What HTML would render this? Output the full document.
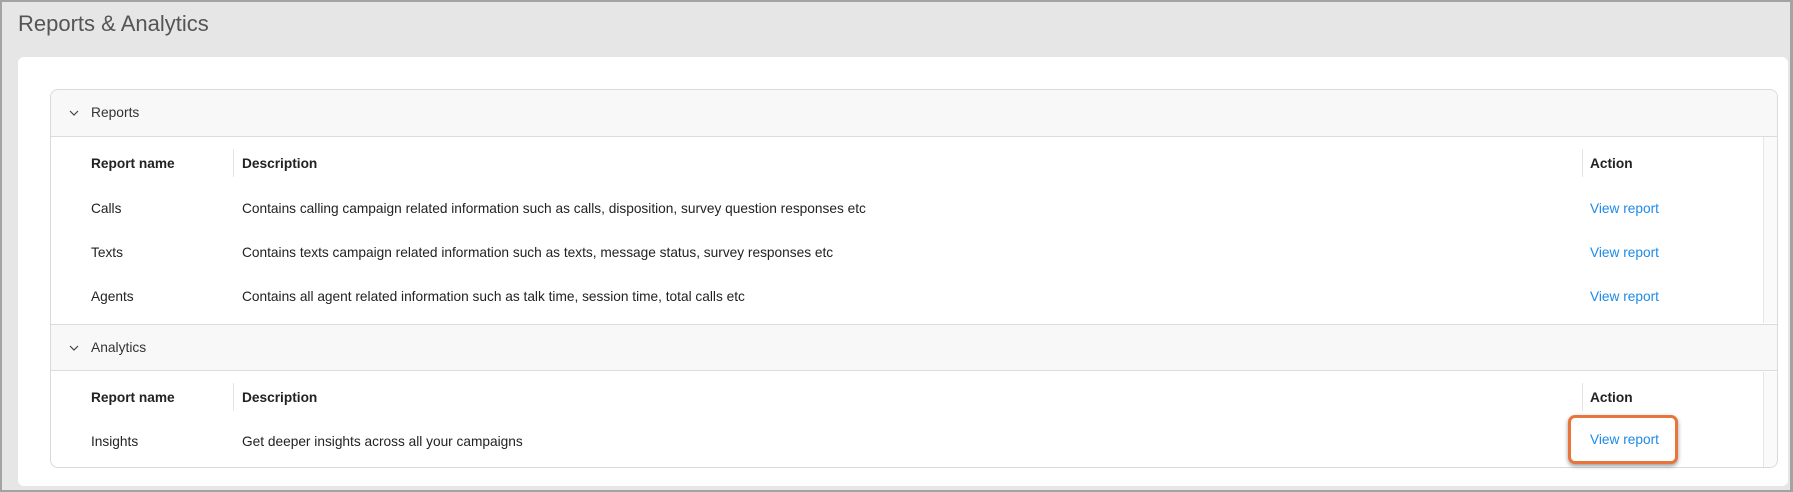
<!DOCTYPE html>
<html><head><meta charset="utf-8"><style>
*{box-sizing:border-box;margin:0;padding:0}
body{width:1793px;height:492px;overflow:hidden;background:#a3a3a3;font-family:"Liberation Sans",sans-serif;position:relative}
#frame{position:absolute;left:2px;top:2px;width:1788px;height:488px;background:#e6e6e6;overflow:hidden}
.t{position:absolute;left:16px;top:9px;font-size:22px;color:#555}
#card{position:absolute;left:18px;top:57px;width:1770px;height:429px;background:#fff;border-radius:6px}
#panel{position:absolute;left:50px;top:89px;width:1728px;height:379px;border:1px solid #d9d9d9;border-radius:8px;overflow:hidden;background:#fff}
.hd{position:absolute;left:0;width:100%;height:47px;background:#f8f8f8;border-bottom:1px solid #dcdcdc;font-size:13.8px;color:#333}
.hd span{position:absolute;left:40px;top:15px}
.hd svg{position:absolute;left:18px;top:20px}
.tx{position:absolute;font-size:13.7px;color:#222;white-space:nowrap}
.b{font-weight:bold}
.l{color:#1d8ae8}
.sep{position:absolute;width:1px;height:28px;background:#e4e4e4}
.sb{position:absolute;left:1712px;width:1px;background:#e6e6e6}
.sbb{position:absolute;left:1713px;width:15px;background:#fafafa}
#box{position:absolute;left:1568px;top:415px;width:110px;height:49px;border:3px solid #e8763c;border-radius:7px;box-shadow:0 2px 4px rgba(0,0,0,.4);background:#fff}
</style></head><body>
<div id="frame">
<div class="t">Reports &amp; Analytics</div>
</div>
<div id="card"></div>
<div id="panel">
<div class="hd" style="top:0"><svg width="10" height="6" viewBox="0 0 10 6"><path d="M1 1l4 4 4-4" stroke="#444" stroke-width="1.2" fill="none"/></svg><span>Reports</span></div>
<div class="sbb" style="top:47px;height:186px"></div><div class="sb" style="top:47px;height:186px"></div>
<div class="tx b" style="left:40px;top:66px">Report name</div>
<div class="sep" style="left:182px;top:59px"></div>
<div class="tx b" style="left:191px;top:66px">Description</div>
<div class="sep" style="left:1531px;top:59px"></div>
<div class="tx b" style="left:1539px;top:66px">Action</div>
<div class="tx" style="left:40px;top:111px">Calls</div>
<div class="tx" style="left:191px;top:111px">Contains calling campaign related information such as calls, disposition, survey question responses etc</div>
<div class="tx l" style="left:1539px;top:111px">View report</div>
<div class="tx" style="left:40px;top:155px">Texts</div>
<div class="tx" style="left:191px;top:155px">Contains texts campaign related information such as texts, message status, survey responses etc</div>
<div class="tx l" style="left:1539px;top:155px">View report</div>
<div class="tx" style="left:40px;top:199px">Agents</div>
<div class="tx" style="left:191px;top:199px">Contains all agent related information such as talk time, session time, total calls etc</div>
<div class="tx l" style="left:1539px;top:199px">View report</div>
<div class="hd" style="top:234px;border-top:1px solid #dcdcdc"><svg width="10" height="6" viewBox="0 0 10 6"><path d="M1 1l4 4 4-4" stroke="#444" stroke-width="1.2" fill="none"/></svg><span>Analytics</span></div>
<div class="sbb" style="top:282px;height:100px"></div><div class="sb" style="top:282px;height:100px"></div>
<div class="tx b" style="left:40px;top:300px">Report name</div>
<div class="sep" style="left:182px;top:293px"></div>
<div class="tx b" style="left:191px;top:300px">Description</div>
<div class="sep" style="left:1531px;top:293px"></div>
<div class="tx b" style="left:1539px;top:300px">Action</div>
<div class="tx" style="left:40px;top:344px">Insights</div>
<div class="tx" style="left:191px;top:344px">Get deeper insights across all your campaigns</div>
</div>
<div id="box"><div class="tx l" style="left:19px;top:14px">View report</div></div>
</body></html>
